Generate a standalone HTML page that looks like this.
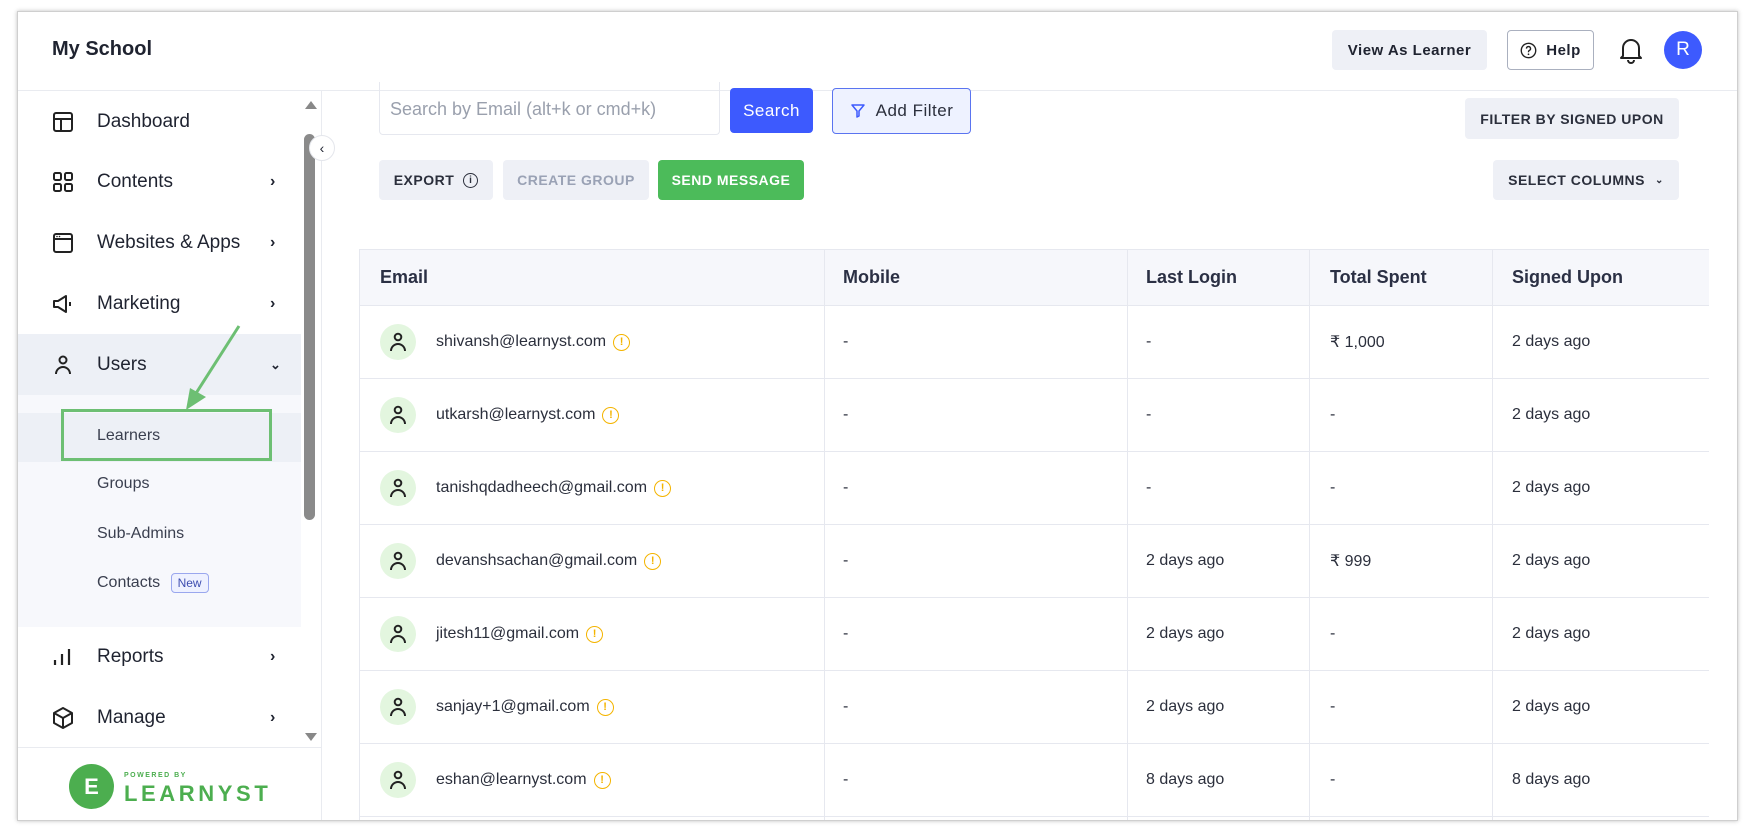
<!DOCTYPE html>
<html><head><meta charset="utf-8">
<style>
*{box-sizing:border-box;margin:0;padding:0}
body{width:1754px;height:830px;background:#fff;font-family:"Liberation Sans",sans-serif;color:#1f2330;position:relative;overflow:hidden}
.frame{position:absolute;left:17px;top:11px;width:1721px;height:810px;border:1px solid #cfcfcf;box-shadow:0 0 4px rgba(0,0,0,.25);background:#fff;overflow:hidden}
.abs{position:absolute}
.hdr{left:0;top:0;width:100%;height:79px;border-bottom:1px solid #e9ebf0}
.btn{position:absolute;display:flex;align-items:center;justify-content:center;font-weight:bold;border-radius:4px;letter-spacing:.5px}
.side{left:0;top:79px;width:304px;height:730px;border-right:1px solid #e9ebf0}
.mi{position:absolute;left:0;width:283px;display:flex;align-items:center;font-size:19px;color:#1f2330}
.mi .ic{position:absolute;left:33px;width:24px;height:24px}
.mi .tx{position:absolute;left:79px}
.mi .ch{position:absolute;left:252px;font-size:16px;font-weight:bold}
.sub{position:absolute;left:79px;font-size:16px;color:#3a3f4f}
.row{position:absolute;left:341px;width:1350px;height:73px;border-bottom:1px solid #e6e8ef;font-size:16px;color:#2b2f3c}
.cell{position:absolute;top:0;height:100%;display:flex;align-items:center}
.vl{position:absolute;top:237px;width:1px;height:572px;background:#e6e8ef}
.av{width:36px;height:36px;border-radius:50%;background:#e3f6df;display:flex;align-items:center;justify-content:center;margin-right:20px}
.warn{width:17px;height:17px;border:1.6px solid #f4b400;border-radius:50%;color:#f4b400;font-size:11px;font-weight:bold;display:inline-flex;align-items:center;justify-content:center;margin-left:7px}
</style></head><body>
<div class="frame">
 <div class="abs hdr">
  <div class="abs" style="left:34px;top:26px;font-size:20px;font-weight:bold">My School</div>
  <div class="btn" style="left:1314px;top:18px;width:155px;height:40px;background:#eef0f6;font-size:15px">View As Learner</div>
  <div class="btn" style="left:1489px;top:18px;width:87px;height:40px;border:1px solid #aab0bf;background:#fff;font-size:15px">
   <svg width="17" height="17" viewBox="0 0 20 20" style="margin-right:9px"><circle cx="10" cy="10" r="8.5" fill="none" stroke="#222" stroke-width="1.6"/><path d="M7.6 7.8a2.4 2.4 0 1 1 3.3 2.2c-.6.3-.9.7-.9 1.4v.6" fill="none" stroke="#222" stroke-width="1.6"/><circle cx="10" cy="14.4" r="1" fill="#222"/></svg>Help</div>
  <svg class="abs" style="left:1600px;top:24px" width="26" height="28" viewBox="0 0 26 28"><path d="M5 20V12a8 8 0 0 1 16 0v8l2 2H3z" fill="none" stroke="#222" stroke-width="2" stroke-linejoin="round"/><path d="M10 24a3 3 0 0 0 6 0" fill="none" stroke="#222" stroke-width="2"/></svg>
  <div class="abs" style="left:1646px;top:19px;width:38px;height:38px;border-radius:50%;background:#3d5afe;color:#fff;font-size:19px;display:flex;align-items:center;justify-content:center">R</div>
 </div>

 <div class="abs side">
  <div class="abs" style="left:0;top:243px;width:283px;height:61px;background:#edf0f6"></div>
  <div class="abs" style="left:0;top:304px;width:283px;height:232px;background:#f7f8fc"></div>
  <div class="abs" style="left:0;top:322px;width:283px;height:49px;background:#edf0f6"></div>
  <div class="mi" style="top:11px;height:40px"><svg class="ic" viewBox="0 0 24 24"><rect x="3" y="3" width="18" height="18" rx="2" fill="none" stroke="#222" stroke-width="2"/><path d="M3 9h18M10 9v12" stroke="#222" stroke-width="2"/></svg><span class="tx">Dashboard</span></div>
  <div class="mi" style="top:71px;height:40px"><svg class="ic" viewBox="0 0 24 24"><g fill="none" stroke="#222" stroke-width="2"><rect x="3" y="3" width="7" height="7" rx="1.5"/><rect x="14" y="3" width="7" height="7" rx="1.5"/><rect x="3" y="14" width="7" height="7" rx="1.5"/><rect x="14" y="14" width="7" height="7" rx="1.5"/></g></svg><span class="tx">Contents</span><span class="ch">›</span></div>
  <div class="mi" style="top:132px;height:40px"><svg class="ic" viewBox="0 0 24 24"><rect x="3" y="3" width="18" height="18" rx="2" fill="none" stroke="#222" stroke-width="2"/><path d="M3 8h18" stroke="#222" stroke-width="2"/><circle cx="6" cy="5.5" r=".8" fill="#222"/><circle cx="8.5" cy="5.5" r=".8" fill="#222"/></svg><span class="tx">Websites &amp; Apps</span><span class="ch">›</span></div>
  <div class="mi" style="top:193px;height:40px"><svg class="ic" viewBox="0 0 24 24"><path d="M3 9h4l8-5v16l-8-5H3z" fill="none" stroke="#222" stroke-width="2" stroke-linejoin="round"/><path d="M19 10v4" stroke="#222" stroke-width="2"/></svg><span class="tx">Marketing</span><span class="ch">›</span></div>
  <div class="mi" style="top:254px;height:40px"><svg class="ic" viewBox="0 0 24 24"><circle cx="12" cy="7" r="3.5" fill="none" stroke="#222" stroke-width="2"/><path d="M5 21a7 7 0 0 1 14 0" fill="none" stroke="#222" stroke-width="2"/></svg><span class="tx">Users</span><span class="ch" style="font-size:13px">⌄</span></div>
  <div class="sub" style="top:336px">Learners</div>
  <div class="sub" style="top:384px">Groups</div>
  <div class="sub" style="top:434px">Sub-Admins</div>
  <div class="sub" style="top:482px">Contacts <span style="display:inline-block;margin-left:6px;font-size:12px;color:#3d4db0;border:1px solid #9aa7ee;background:#eef1ff;border-radius:4px;padding:2px 6px">New</span></div>
  <div class="abs" style="left:43px;top:318px;width:211px;height:52px;border:3px solid #6dbf73"></div>
  <svg class="abs" style="left:140px;top:225px" width="90" height="100"><path d="M81 10L35 82" stroke="#6dbf73" stroke-width="3"/><path d="M28 94l4-22 16 9z" fill="#6dbf73"/></svg>
  <div class="mi" style="top:546px;height:40px"><svg class="ic" viewBox="0 0 24 24"><path d="M4 20v-5M11 20V9M18 20V4" stroke="#222" stroke-width="2.2"/></svg><span class="tx">Reports</span><span class="ch">›</span></div>
  <div class="mi" style="top:607px;height:40px"><svg class="ic" viewBox="0 0 24 24"><g fill="none" stroke="#222" stroke-width="2" stroke-linejoin="round"><path d="M12 2l9 5v10l-9 5-9-5V7z"/><path d="M3 7l9 5 9-5M12 12v10"/></g></svg><span class="tx">Manage</span><span class="ch">›</span></div>
  <div class="abs" style="left:0;top:656px;width:304px;height:1px;background:#e9ebf0"></div>
  <div class="abs" style="left:287px;top:10px;width:0;height:0;border-left:6px solid transparent;border-right:6px solid transparent;border-bottom:8px solid #888"></div>
  <div class="abs" style="left:287px;top:642px;width:0;height:0;border-left:6px solid transparent;border-right:6px solid transparent;border-top:8px solid #888"></div>
  <div class="abs" style="left:286px;top:43px;width:11px;height:386px;border-radius:6px;background:#8a8a8a"></div>
  <div class="abs" style="left:51px;top:673px;width:45px;height:45px;border-radius:50%;background:#4cae4f;color:#fff;font-weight:bold;font-size:22px;display:flex;align-items:center;justify-content:center">E</div>
  <div class="abs" style="left:106px;top:681px;font-size:7px;font-weight:bold;color:#4cae4f;letter-spacing:1.5px">POWERED BY</div>
  <div class="abs" style="left:106px;top:690px;font-size:22px;font-weight:bold;color:#4cae4f;letter-spacing:3.6px">LEARNYST</div>
 </div>
 <div class="abs" style="left:291px;top:123px;width:26px;height:26px;border-radius:50%;background:#fff;border:1px solid #e4e6ec;font-size:14px;display:flex;align-items:center;justify-content:center">‹</div>

 <div class="abs" style="left:361px;top:70px;width:341px;height:53px;border:1px solid #e6e8ef;border-top:none;border-radius:0 0 4px 4px;font-size:18px;color:#9aa0ad;padding:17px 0 0 10px">Search by Email (alt+k or cmd+k)</div>
 <div class="btn" style="left:712px;top:76px;width:83px;height:45px;background:#3d5afe;color:#fff;font-size:17px;font-weight:normal">Search</div>
 <div class="btn" style="left:814px;top:76px;width:139px;height:46px;background:#eef2ff;border:1px solid #5a74f0;font-size:17px;font-weight:normal;color:#2b2f3c"><svg width="16" height="16" viewBox="0 0 16 16" style="margin-right:10px"><path d="M2 2h12l-5 6v5l-2 1V8z" fill="none" stroke="#3d5afe" stroke-width="1.5" stroke-linejoin="round"/></svg>Add Filter</div>
 <div class="btn" style="left:1447px;top:86px;width:214px;height:41px;background:#eef0f6;font-size:14px;color:#2b2f3c">FILTER BY SIGNED UPON</div>
 <div class="btn" style="left:361px;top:148px;width:114px;height:40px;background:#eef0f6;font-size:14px;color:#2b2f3c">EXPORT <span style="margin-left:9px;width:15px;height:15px;border:1.5px solid #2b2f3c;border-radius:50%;font-size:10px;display:inline-flex;align-items:center;justify-content:center">i</span></div>
 <div class="btn" style="left:485px;top:148px;width:146px;height:40px;background:#eef0f6;font-size:14px;color:#9aa2b5">CREATE GROUP</div>
 <div class="btn" style="left:640px;top:148px;width:146px;height:40px;background:#4cbb5a;font-size:14px;color:#fff">SEND MESSAGE</div>
 <div class="btn" style="left:1475px;top:148px;width:186px;height:40px;background:#eef0f6;font-size:14px;color:#2b2f3c">SELECT COLUMNS <span style="margin-left:10px;font-size:10px">⌄</span></div>

 <div class="abs" style="left:341px;top:237px;width:1350px;height:57px;background:#f6f7fb;border-top:1px solid #e6e8ef;border-bottom:1px solid #e6e8ef;font-size:18px;font-weight:bold;color:#2b3044">
  <span class="abs" style="left:21px;top:17px">Email</span>
  <span class="abs" style="left:484px;top:17px">Mobile</span>
  <span class="abs" style="left:787px;top:17px">Last Login</span>
  <span class="abs" style="left:971px;top:17px">Total Spent</span>
  <span class="abs" style="left:1153px;top:17px">Signed Upon</span>
 </div>
 <div class="vl" style="left:341px"></div><div class="vl" style="left:806px"></div><div class="vl" style="left:1109px"></div><div class="vl" style="left:1291px"></div><div class="vl" style="left:1474px"></div>

 <div class="row" style="top:294px"><div class="cell" style="left:21px"><div class="av"><svg width="20" height="22" viewBox="0 0 20 22"><circle cx="10" cy="6" r="3.3" fill="none" stroke="#222" stroke-width="2"/><path d="M3 20a7 7 0 0 1 14 0" fill="none" stroke="#222" stroke-width="2"/></svg></div>shivansh@learnyst.com<span class="warn">!</span></div><div class="cell" style="left:484px">-</div><div class="cell" style="left:787px">-</div><div class="cell" style="left:971px">₹ 1,000</div><div class="cell" style="left:1153px">2 days ago</div></div>
 <div class="row" style="top:367px"><div class="cell" style="left:21px"><div class="av"><svg width="20" height="22" viewBox="0 0 20 22"><circle cx="10" cy="6" r="3.3" fill="none" stroke="#222" stroke-width="2"/><path d="M3 20a7 7 0 0 1 14 0" fill="none" stroke="#222" stroke-width="2"/></svg></div>utkarsh@learnyst.com<span class="warn">!</span></div><div class="cell" style="left:484px">-</div><div class="cell" style="left:787px">-</div><div class="cell" style="left:971px">-</div><div class="cell" style="left:1153px">2 days ago</div></div>
 <div class="row" style="top:440px"><div class="cell" style="left:21px"><div class="av"><svg width="20" height="22" viewBox="0 0 20 22"><circle cx="10" cy="6" r="3.3" fill="none" stroke="#222" stroke-width="2"/><path d="M3 20a7 7 0 0 1 14 0" fill="none" stroke="#222" stroke-width="2"/></svg></div>tanishqdadheech@gmail.com<span class="warn">!</span></div><div class="cell" style="left:484px">-</div><div class="cell" style="left:787px">-</div><div class="cell" style="left:971px">-</div><div class="cell" style="left:1153px">2 days ago</div></div>
 <div class="row" style="top:513px"><div class="cell" style="left:21px"><div class="av"><svg width="20" height="22" viewBox="0 0 20 22"><circle cx="10" cy="6" r="3.3" fill="none" stroke="#222" stroke-width="2"/><path d="M3 20a7 7 0 0 1 14 0" fill="none" stroke="#222" stroke-width="2"/></svg></div>devanshsachan@gmail.com<span class="warn">!</span></div><div class="cell" style="left:484px">-</div><div class="cell" style="left:787px">2 days ago</div><div class="cell" style="left:971px">₹ 999</div><div class="cell" style="left:1153px">2 days ago</div></div>
 <div class="row" style="top:586px"><div class="cell" style="left:21px"><div class="av"><svg width="20" height="22" viewBox="0 0 20 22"><circle cx="10" cy="6" r="3.3" fill="none" stroke="#222" stroke-width="2"/><path d="M3 20a7 7 0 0 1 14 0" fill="none" stroke="#222" stroke-width="2"/></svg></div>jitesh11@gmail.com<span class="warn">!</span></div><div class="cell" style="left:484px">-</div><div class="cell" style="left:787px">2 days ago</div><div class="cell" style="left:971px">-</div><div class="cell" style="left:1153px">2 days ago</div></div>
 <div class="row" style="top:659px"><div class="cell" style="left:21px"><div class="av"><svg width="20" height="22" viewBox="0 0 20 22"><circle cx="10" cy="6" r="3.3" fill="none" stroke="#222" stroke-width="2"/><path d="M3 20a7 7 0 0 1 14 0" fill="none" stroke="#222" stroke-width="2"/></svg></div>sanjay+1@gmail.com<span class="warn">!</span></div><div class="cell" style="left:484px">-</div><div class="cell" style="left:787px">2 days ago</div><div class="cell" style="left:971px">-</div><div class="cell" style="left:1153px">2 days ago</div></div>
 <div class="row" style="top:732px"><div class="cell" style="left:21px"><div class="av"><svg width="20" height="22" viewBox="0 0 20 22"><circle cx="10" cy="6" r="3.3" fill="none" stroke="#222" stroke-width="2"/><path d="M3 20a7 7 0 0 1 14 0" fill="none" stroke="#222" stroke-width="2"/></svg></div>eshan@learnyst.com<span class="warn">!</span></div><div class="cell" style="left:484px">-</div><div class="cell" style="left:787px">8 days ago</div><div class="cell" style="left:971px">-</div><div class="cell" style="left:1153px">8 days ago</div></div>
</div>
</body></html>
